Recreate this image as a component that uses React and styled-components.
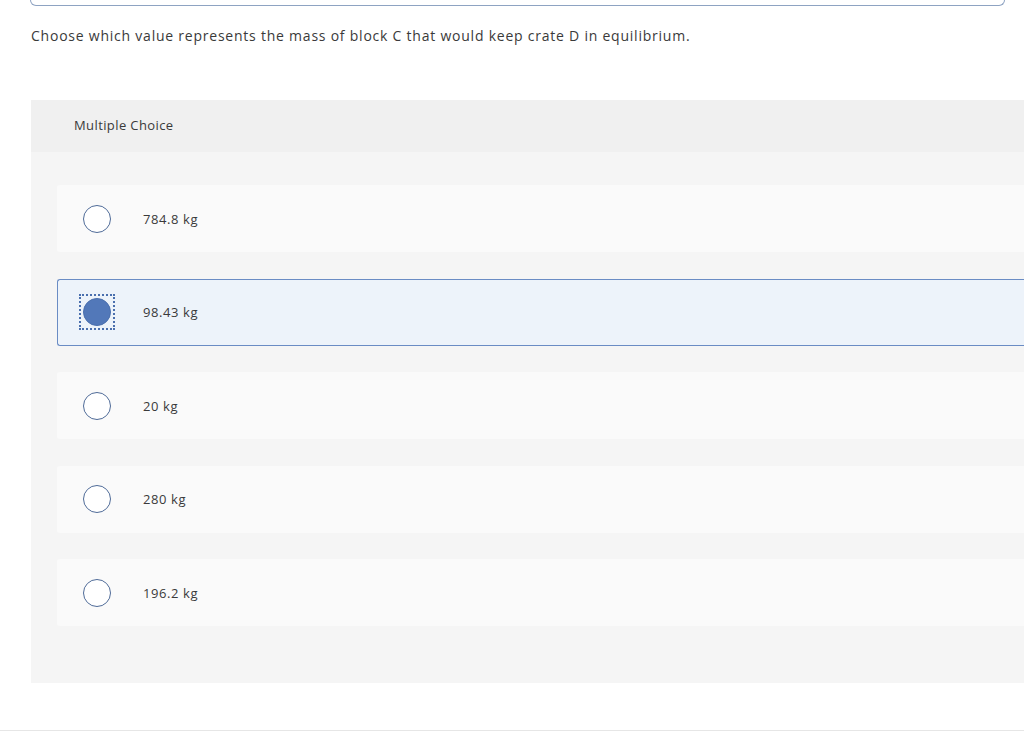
import React, { useState } from 'react';
import styled, { createGlobalStyle } from 'styled-components';

const GlobalStyle = createGlobalStyle`
    html, body {
        margin: 0;
        padding: 0;
        background: #ffffff;
        overflow: hidden;
    }

    body {
        font-family: "Open Sans", "Noto Sans", "Liberation Sans", sans-serif;
        color: #333333;
    }
`

const choices = ['784.8 kg', '98.43 kg', '20 kg', '280 kg', '196.2 kg']

export default function App() {
    const [picked, setPicked] = useState(1)

    return (
        <Page>
            <GlobalStyle />
            <TopBox />
            <Question>
                Choose which value represents the mass of block C that would keep crate D in equilibrium.
            </Question>

            <Panel>
                <PanelHeader>Multiple Choice</PanelHeader>
                <ChoiceList>
                    {
                        choices.map((label, i) => (
                            <Choice key={label} $selected={picked === i} onClick={() => setPicked(i)}>
                                <FocusRing $selected={picked === i}>
                                    <Radio $selected={picked === i} />
                                </FocusRing>
                                <ChoiceText>{label}</ChoiceText>
                            </Choice>
                        ))
                    }
                </ChoiceList>
            </Panel>

            <BottomRule />
        </Page>
    )
}

const Page = styled.div`
    width: 1024px;
    height: 737px;
    position: relative;
`

const TopBox = styled.div`
    margin-left: 30px;
    width: 975px;
    height: 6px;
    box-sizing: border-box;
    border: 1px solid #8ea3c2;
    border-top: none;
    border-radius: 0 0 7px 7px;
`

const Question = styled.div`
    margin: 20px 0 0 31px;
    font-size: 14px;
    line-height: 20px;
    letter-spacing: 0.77px;
    color: #3a3a3a;
`

const Panel = styled.div`
    margin: 54px 0 0 31px;
    background: #f5f5f5;
`

const PanelHeader = styled.div`
    height: 52px;
    display: flex;
    align-items: center;
    padding-left: 43px;
    padding-bottom: 2px;
    box-sizing: border-box;
    background: #f0f0f0;
    font-size: 13px;
    letter-spacing: 0.4px;
    color: #3a3a3a;
`

const ChoiceList = styled.div`
    display: flex;
    flex-direction: column;
    gap: 26.5px;
    padding: 33px 0 57px 26px;
`

const Choice = styled.div`
    height: 67px;
    box-sizing: border-box;
    display: flex;
    align-items: center;
    padding-left: ${p => p.$selected ? '21px' : '22px'};
    background: ${p => p.$selected ? '#edf3fa' : '#fafafa'};
    border: ${p => p.$selected ? '1px solid #6a8cc4' : 'none'};
    border-right: none;
    border-radius: 3px 0 0 3px;
    cursor: pointer;
`

const FocusRing = styled.span`
    width: 36px;
    height: 36px;
    box-sizing: border-box;
    flex: none;
    display: flex;
    align-items: center;
    justify-content: center;
    border: 2px dotted ${p => p.$selected ? '#4a6fae' : 'transparent'};
`

const Radio = styled.span`
    width: 28px;
    height: 28px;
    box-sizing: border-box;
    border-radius: 50%;
    border: 1.5px solid ${p => p.$selected ? '#4a6fae' : '#4f6b98'};
    background: ${p => p.$selected ? '#5278b9' : '#ffffff'};
`

const ChoiceText = styled.span`
    margin-left: 28px;
    font-size: 13px;
    letter-spacing: 0.6px;
    color: #3a3a3a;
`

const BottomRule = styled.div`
    position: absolute;
    left: 0;
    right: 0;
    top: 730px;
    height: 1px;
    background: #e6e6e6;
`
